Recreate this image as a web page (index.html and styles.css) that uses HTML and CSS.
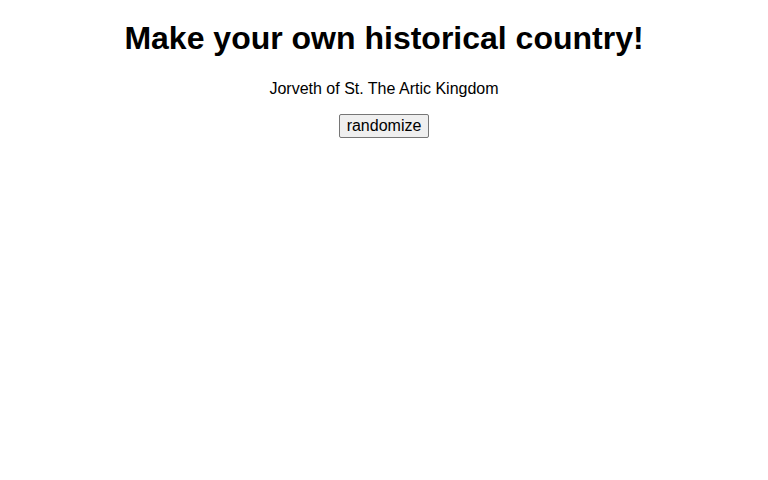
FILE: index.html
```html
<!DOCTYPE html>
<html lang="en">
<head>
    <meta charset="UTF-8">
    <meta name="viewport" content="width=device-width, initial-scale=1.0">
    <title>Historical Country Generator</title>
    <link rel="stylesheet" href="styles.css">
</head>
<body>
    <div class="main">
        <h1>Make your own historical country!</h1>
        <p id="country-name">Jorveth of St. The Artic Kingdom</p>
        <button type="button" class="randomize-btn" onclick="randomize()">randomize</button>
    </div>

    <script>
        const names = ["Jorveth", "Aldmere", "Castavia", "Norhelm", "Valdoria", "Eskaris"];
        const middles = ["of St.", "of Upper", "of New", "of Old"];
        const titles = ["The Artic Kingdom", "The Grand Duchy", "The Free Republic", "The Holy Empire"];

        function pick(list) {
            return list[Math.floor(Math.random() * list.length)];
        }

        function randomize() {
            document.getElementById('country-name').innerText = pick(names) + " " + pick(middles) + " " + pick(titles);
        }
    </script>
</body>
</html>
```

FILE: styles.css
```css
body {
    font-family: "Liberation Sans", Arial, sans-serif;
    margin: 0;
    background-color: #FFFFFF;
    color: #000000;
}

.main {
    text-align: center;
}

h1 {
    font-size: 32px;
    margin: 20px 0 23px;
}

p {
    font-size: 16px;
    margin: 16px 0;
}

.randomize-btn {
    font-family: inherit;
    font-size: 16px;
    padding: 2px 7px;
    border: 1px solid #767676;
    border-radius: 2px;
    background-color: #EFEFEF;
    color: #000000;
}
```
